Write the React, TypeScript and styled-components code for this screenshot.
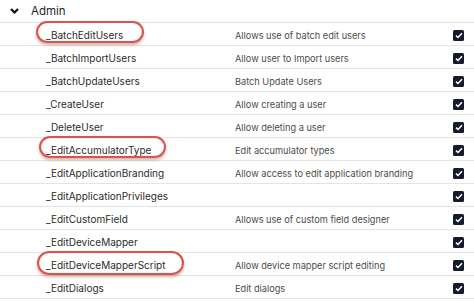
import React from "react";
import styled, { createGlobalStyle } from "styled-components";

const GlobalStyle = createGlobalStyle`
  html, body {
    margin: 0;
    padding: 0;
    background: #ffffff;
  }
  body {
    font-family: Inter, "Noto Sans", sans-serif;
    width: 474px;
    height: 301px;
    overflow: hidden;
  }
`;

const Table = styled.div`
  display: flex;
  flex-direction: column;
  width: 474px;
`;

const GroupHeader = styled.div`
  display: flex;
  align-items: center;
  height: 22px;
  padding-left: 10px;
  gap: 12px;
  border-bottom: 1px solid #e4e4e4;
  color: #1f1f1f;
  font-size: 11.5px;
`;

const Row = styled.div`
  display: grid;
  grid-template-columns: 189px 218px 11px;
  align-items: center;
  height: 22px;
  padding-left: 46px;
  border-bottom: 1px solid #e4e4e4;
`;

const NameCell = styled.div`
  position: relative;
  align-self: stretch;
  display: flex;
  align-items: center;
  color: #2b2b2b;
  font-size: 10px;
  white-space: nowrap;
  padding-top: 2px;
`;

// red hand-drawn-style ring laid over a privilege name
const Highlight = styled.span<{ $x: number; $w: number; $h: number }>`
  position: absolute;
  left: ${(p) => p.$x}px;
  top: -2px;
  box-sizing: border-box;
  width: ${(p) => p.$w}px;
  height: ${(p) => p.$h}px;
  border: 2.5px solid #d9544a;
  border-radius: 12px;
  box-shadow: 0 2px 3px rgba(120, 40, 30, 0.35), inset 0 0 1px rgba(240, 130, 115, 0.8);
  pointer-events: none;
`;

const DescCell = styled.div`
  color: #4c4c4c;
  font-size: 9.2px;
  white-space: nowrap;
  padding-top: 2px;
`;

const Check = styled.span`
  display: flex;
  align-items: center;
  justify-content: center;
  width: 11px;
  height: 11px;
  border-radius: 1.5px;
  background: #161b2b;
  margin-top: 2px;
`;

const Chevron = () => (
  <svg width="9" height="6" viewBox="0 0 9 6">
    <path d="M1 1 L4.5 4.5 L8 1" fill="none" stroke="#111" strokeWidth="2.2" />
  </svg>
);

const Tick = () => (
  <svg width="8" height="7" viewBox="0 0 8 7">
    <path d="M1 3.6 L3 5.5 L7 1.2" fill="none" stroke="#fff" strokeWidth="1.5" />
  </svg>
);

interface Ring {
  x: number;
  w: number;
  h: number;
}

interface Privilege {
  name: string;
  description: string;
  ring?: Ring;
}

const privileges: Privilege[] = [
  { name: "_BatchEditUsers", description: "Allows use of batch edit users", ring: { x: -10, w: 108, h: 22 } },
  { name: "_BatchImportUsers", description: "Allow user to Import users" },
  { name: "_BatchUpdateUsers", description: "Batch Update Users" },
  { name: "_CreateUser", description: "Allow creating a user" },
  { name: "_DeleteUser", description: "Allow deleting a user" },
  { name: "_EditAccumulatorType", description: "Edit accumulator types", ring: { x: -7, w: 127, h: 22 } },
  { name: "_EditApplicationBranding", description: "Allow access to edit application branding" },
  { name: "_EditApplicationPrivileges", description: "" },
  { name: "_EditCustomField", description: "Allows use of custom field designer" },
  { name: "_EditDeviceMapper", description: "" },
  { name: "_EditDeviceMapperScript", description: "Allow device mapper script editing", ring: { x: -9, w: 147, h: 24 } },
  { name: "_EditDialogs", description: "Edit dialogs" },
];

const App: React.FC = () => (
  <>
    <GlobalStyle />
    <Table>
      <GroupHeader>
        <Chevron />
        <span>Admin</span>
      </GroupHeader>
      {privileges.map((p) => (
        <Row key={p.name}>
          <NameCell>
            {p.name}
            {p.ring && <Highlight $x={p.ring.x} $w={p.ring.w} $h={p.ring.h} />}
          </NameCell>
          <DescCell>{p.description}</DescCell>
          <Check>
            <Tick />
          </Check>
        </Row>
      ))}
    </Table>
  </>
);

export default App;
